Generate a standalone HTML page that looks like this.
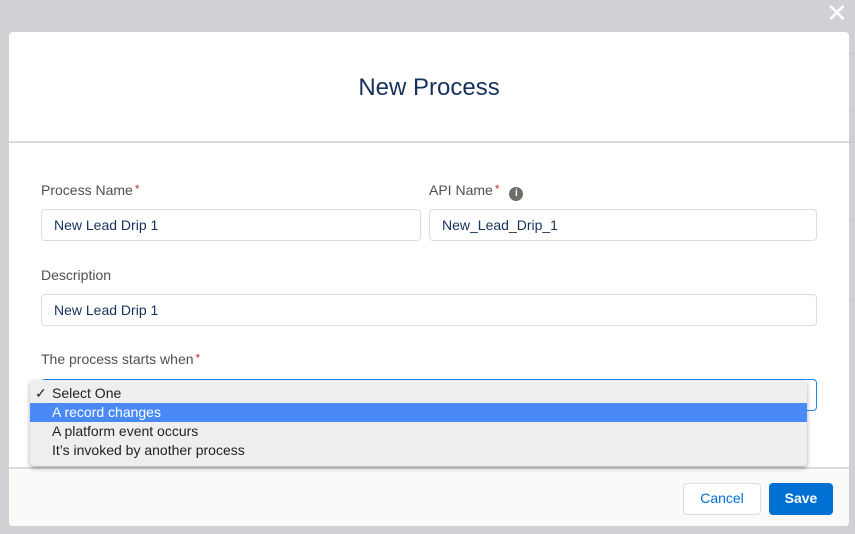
<!DOCTYPE html>
<html><head><meta charset="utf-8"><style>
*{box-sizing:border-box;margin:0;padding:0}
body{width:855px;height:534px;background:#d0d1d4;font-family:"Liberation Sans",sans-serif;position:relative;overflow:hidden}
.line{position:absolute;left:849px;width:6px;height:1px;background:#c4c5c8}
.modal{position:absolute;left:9px;top:32px;width:840px;height:494px;background:#fff;border-radius:4px;overflow:hidden}
.hdr{height:111px;border-bottom:2px solid #dddbda;text-align:center}
.hdr h2{font-weight:normal;font-size:24px;color:#16325c;padding-top:42px}
.lbl{position:absolute;font-size:14px;color:#514f4d}
.lbl b{color:#c23934;font-weight:normal;font-size:12px;vertical-align:top;margin-left:2px}
.inp{position:absolute;height:32px;border:1px solid #d8dde6;border-radius:4px;font-size:14px;color:#16325c;padding:7px 12px}
.foot{position:absolute;left:0;top:435px;width:840px;height:59px;background:#fafaf9;border-top:2px solid #dddbda}
.btn{position:absolute;top:14px;height:32px;border-radius:4px;font-size:14px;text-align:center;line-height:28px}
.dd{position:absolute;left:30px;top:380px;width:777px;height:86px;background:#eeeeee;border-radius:4px;box-shadow:0 2px 5px rgba(0,0,0,.35);font-size:14px;color:#222;padding-top:4px}
.dd div{height:19px;line-height:19px;padding-left:22px;position:relative}
.dd .h{background:#4a8af8;color:#fff}
</style></head><body>
<div class="line" style="top:53px"></div><div class="line" style="top:110px"></div><div class="line" style="top:142px"></div><div class="line" style="top:220px"></div><div class="line" style="top:300px"></div>
<div style="position:absolute;left:826px;top:0;font-size:26px;color:#fff;line-height:26px">✕</div>
<div class="modal">
<div class="hdr"><h2>New Process</h2></div>
<div class="lbl" style="left:32px;top:150px">Process Name<b>*</b></div>
<div class="lbl" style="left:420px;top:150px">API Name<b>*</b> <span style="display:inline-block;width:14px;height:14px;border-radius:50%;background:#706e6b;color:#fff;font-size:10px;text-align:center;line-height:14px;font-weight:bold;margin-left:6px;vertical-align:-1px">i</span></div>
<div class="inp" style="left:32px;top:177px;width:380px">New Lead Drip 1</div>
<div class="inp" style="left:420px;top:177px;width:388px">New_Lead_Drip_1</div>
<div class="lbl" style="left:32px;top:235px">Description</div>
<div class="inp" style="left:32px;top:262px;width:776px">New Lead Drip 1</div>
<div class="lbl" style="left:32px;top:319px">The process starts when<b>*</b></div>
<div class="inp" style="left:32px;top:347px;width:776px;border-color:#1589ee"></div>
<div class="foot">
<div class="btn" style="left:674px;width:78px;border:1px solid #d8dde6;background:#fff;color:#0070d2">Cancel</div>
<div class="btn" style="left:760px;width:64px;background:#0070d2;color:#fff;font-weight:bold;line-height:30px">Save</div>
</div>
</div>
<div class="dd">
<div><span style="position:absolute;left:5px">✓</span>Select One</div>
<div class="h">A record changes</div>
<div>A platform event occurs</div>
<div>It’s invoked by another process</div>
</div>
</body></html>
